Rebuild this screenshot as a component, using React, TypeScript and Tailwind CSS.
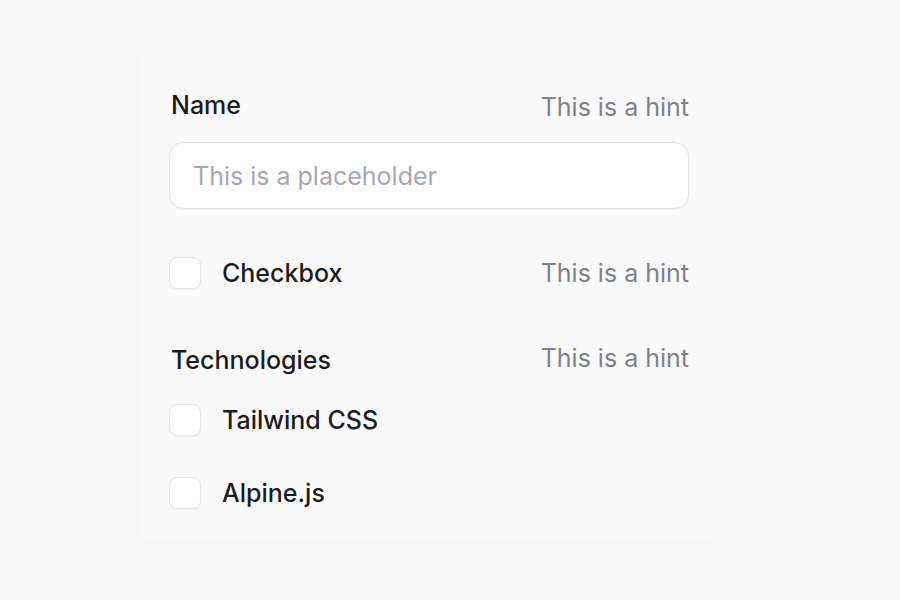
import { useState } from 'react';

const font = { fontFamily: 'Inter, "Noto Sans", sans-serif' };

function Box({ checked, onToggle }: { checked: boolean; onToggle: () => void }) {
  return (
    <button
      type="button"
      onClick={onToggle}
      className={`w-[32px] h-[32px] shrink-0 rounded-[8px] border border-[#e6e6e6] shadow-[0_1px_2px_rgba(0,0,0,0.05)] ${checked ? 'bg-[#18181b]' : 'bg-white'}`}
    />
  );
}

export default function App() {
  const [checks, setChecks] = useState<Record<string, boolean>>({});
  const toggle = (k: string) => setChecks(c => ({ ...c, [k]: !c[k] }));

  return (
    <div className="w-[900px] h-[600px] bg-[#f8f8f8] pt-[55px] pl-[142px]" style={font}>
      <div className="w-[570px] h-[485px] bg-[#fafafa] pl-[27px] pr-[23px] pt-[34px]">
        {/* Name */}
        <div className="flex items-center justify-between h-[32px]">
          <span className="text-[25px] leading-[32px] font-medium text-[#1c1c1e] pl-[2px]">Name</span>
          <span className="text-[25px] leading-[32px] text-[#80808a] mt-[4px]">This is a hint</span>
        </div>
        <input
          placeholder="This is a placeholder"
          className="mt-[21px] w-full h-[67px] rounded-[14px] bg-white border border-[#e4e4e7] shadow-[0_1px_2px_rgba(0,0,0,0.04)] px-[23px] text-[25px] text-[#1c1c1e] placeholder:text-[#a8a8b0] outline-none"
        />

        {/* Checkbox */}
        <div className="mt-[48px] flex items-center justify-between h-[32px]">
          <label className="flex items-center gap-[21px]">
            <Box checked={!!checks.main} onToggle={() => toggle('main')} />
            <span className="text-[25px] leading-[32px] font-medium text-[#1c1c1e]">Checkbox</span>
          </label>
          <span className="text-[25px] leading-[32px] text-[#80808a]">This is a hint</span>
        </div>

        {/* Technologies */}
        <div className="mt-[54px] flex items-center justify-between h-[32px]">
          <span className="text-[25px] leading-[32px] font-medium text-[#1c1c1e] pl-[2px] mt-[2px]">Technologies</span>
          <span className="text-[25px] leading-[32px] text-[#80808a] -mt-[2px]">This is a hint</span>
        </div>
        <div className="mt-[29px] flex flex-col gap-[41px]">
          {['Tailwind CSS', 'Alpine.js'].map(t => (
            <label key={t} className="flex items-center gap-[21px] h-[32px]">
              <Box checked={!!checks[t]} onToggle={() => toggle(t)} />
              <span className="text-[25px] leading-[32px] font-medium text-[#1c1c1e]">{t}</span>
            </label>
          ))}
        </div>
      </div>
    </div>
  );
}
